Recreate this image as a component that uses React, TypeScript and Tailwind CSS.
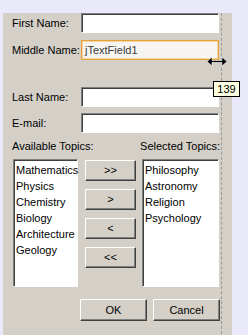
import React from 'react';

const font = { fontFamily: '"Liberation Sans", Arial, sans-serif' };

const sunken =
  'border border-t-[#808080] border-l-[#808080] border-b-white border-r-white shadow-[inset_1px_1px_0_#404040] bg-white';
const raised =
  'border border-t-white border-l-white border-b-[#404040] border-r-[#404040] shadow-[inset_-1px_-1px_0_#808080] bg-[#d4d0c8] flex items-center justify-center text-[11px] text-black';

const available = ['Mathematics', 'Physics', 'Chemistry', 'Biology', 'Architecture', 'Geology'];
const selected = ['Philosophy', 'Astronomy', 'Religion', 'Psychology'];

function Row({ label, children, className }: { label: string; children: React.ReactNode; className?: string }) {
  return (
    <div className={`flex items-center h-[20px] ${className ?? ''}`}>
      <span className="w-[69px] text-[11px] text-black">{label}</span>
      {children}
    </div>
  );
}

function TopicList({ items, className }: { items: string[]; className?: string }) {
  return (
    <div className={`${sunken} h-[128px] pt-[2px] pl-[2px] ${className ?? ''}`}>
      {items.map((t) => (
        <div key={t} className="h-[16px] leading-[16px] text-[11px] text-black whitespace-nowrap">
          {t}
        </div>
      ))}
    </div>
  );
}

export default function App() {
  return (
    <div className="w-[248px] h-[335px] bg-[#e9e9f9] pt-[3px] pl-[3px] overflow-hidden" style={font}>
      <div className="relative w-[229px] h-[326px] bg-[#d4d0c8] pl-[9px]">
        {/* design guide */}
        <div className="absolute left-[218px] top-0 bottom-0 border-l border-dashed border-[#9c9a96]" />

        <Row label="First Name:" className="mt-[10px]">
          <div className={`${sunken} w-[138px] h-[20px]`} />
        </Row>
        <Row label="Middle Name:" className="mt-[7px]">
          <div className="w-[138px] h-[20px] border border-[#e8a23a] shadow-[inset_0_0_0_1px_#f4d4a0] bg-[#f6f5f1] flex items-center pl-[3px] text-[11px] text-[#3a3a3a]">
            jTextField1
          </div>
        </Row>
        <Row label="Last Name:" className="mt-[27px]">
          <div className={`${sunken} w-[138px] h-[20px]`} />
        </Row>
        <Row label="E-mail:" className="mt-[6px]">
          <div className={`${sunken} w-[138px] h-[20px]`} />
        </Row>

        <div className="mt-[7px] flex justify-between w-[208px] h-[13px] text-[11px] leading-[13px] text-black">
          <span>Available Topics:</span>
          <span>Selected Topics:</span>
        </div>

        <div className="mt-[6px] flex">
          <TopicList items={available} className="ml-[1px] w-[65px]" />
          <div className="ml-[7px] mt-[1px] flex flex-col gap-[8px]">
            <button className={`${raised} w-[51px] h-[21px]`}>&gt;&gt;</button>
            <button className={`${raised} w-[51px] h-[21px]`}>&gt;</button>
            <button className={`${raised} w-[51px] h-[21px]`}>&lt;</button>
            <button className={`${raised} w-[51px] h-[21px]`}>&lt;&lt;</button>
          </div>
          <TopicList items={selected} className="ml-[6px] w-[77px]" />
        </div>

        <div className="mt-[12px] ml-[68px] flex gap-[6px]">
          <button className={`${raised} w-[67px] h-[22px]`}>OK</button>
          <button className={`${raised} w-[67px] h-[22px]`}>Cancel</button>
        </div>

        {/* resize cursor */}
        <svg className="absolute left-[204px] top-[44px]" width="20" height="9" viewBox="0 0 20 9">
          <path d="M0 4.5 L5 0 L5 3.5 L15 3.5 L15 0 L20 4.5 L15 9 L15 5.5 L5 5.5 L5 9 Z" fill="#000" stroke="#fff" strokeWidth="0.6" />
        </svg>

        {/* size tooltip */}
        <div className="absolute left-[210px] top-[68px] w-[27px] h-[16px] bg-[#ffffe1] border border-black flex items-center justify-center text-[11px] text-black">
          139
        </div>
      </div>
    </div>
  );
}
